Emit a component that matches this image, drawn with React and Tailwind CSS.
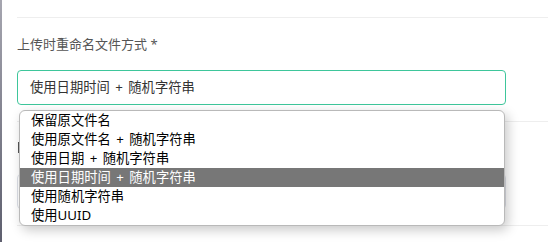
import React from "react";

const options = [
  "保留原文件名",
  "使用原文件名 + 随机字符串",
  "使用日期 + 随机字符串",
  "使用日期时间 + 随机字符串",
  "使用随机字符串",
  "使用UUID",
];

export default function App() {
  const selected = "使用日期时间 + 随机字符串";

  return (
    <div className="relative flex w-[548px] h-[242px] overflow-hidden bg-white font-['Noto_Sans','Noto_Sans_CJK_SC',sans-serif]">
      {/* left window edge */}
      <div className="w-[2px] shrink-0 bg-gradient-to-b from-[#a6a6b0] to-[#5e5f6e]" />

      <div className="flex-1 pl-[15px]">
        <div className="mt-[17px] border-t border-[#eeeeee]" />

        {/* rename mode field */}
        <div className="mt-[16px] text-[13px] leading-[20px] text-[#555555]">
          上传时重命名文件方式 *
        </div>
        <div className="mt-[16px] mr-[42px] flex h-[35px] items-center rounded-[4px] border border-[#3ec69b] pl-[12px] text-[13.3px] text-[#333333] [word-spacing:2px]">
          {selected}
        </div>

        <div className="mt-[16px] border-t border-[#eeeeee]" />

        {/* next field, hidden behind the popup except its left edge */}
        <div className="mt-[15px] flex h-[20px] items-center pl-[1px]">
          <div className="h-[11px] w-[2px] bg-[#555555]" />
        </div>
        <div className="mt-[17px] mr-[42px] h-[35px] rounded-[4px] border border-[#dcdfe6]" />

        <div className="mt-[16px] border-t border-[#eeeeee]" />
      </div>

      {/* native select popup */}
      <div className="absolute left-[19px] top-[110px] w-[486px] overflow-hidden rounded-[6px] border border-[#b9b9b9] bg-white shadow-[3px_4px_12px_rgba(0,0,0,0.22)]">
        {options.map((o) => (
          <div
            key={o}
            className={
              o === selected
                ? "h-[19px] pl-[11px] text-[13.3px] leading-[19px] [word-spacing:2px] bg-[#777777] text-white"
                : "h-[19px] pl-[11px] text-[13.3px] leading-[19px] [word-spacing:2px] text-black"
            }
          >
            {o}
          </div>
        ))}
      </div>
    </div>
  );
}
